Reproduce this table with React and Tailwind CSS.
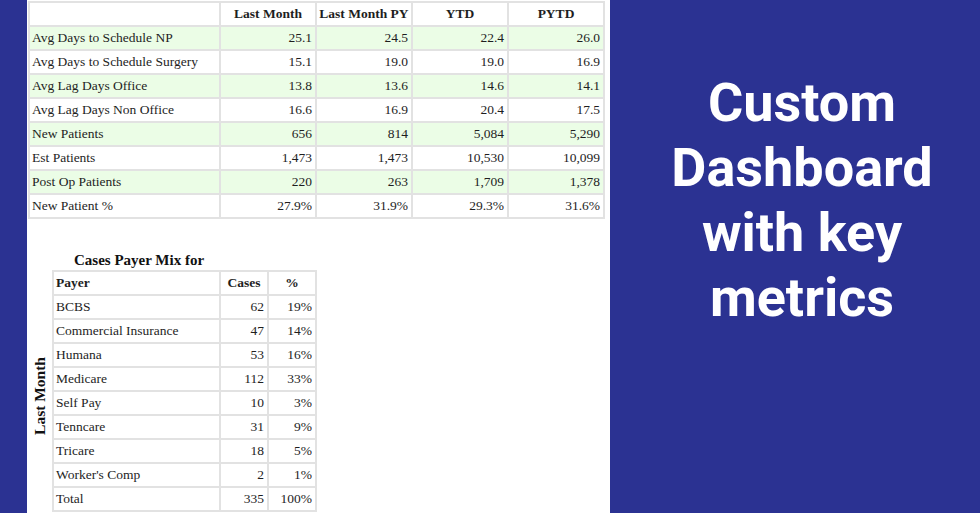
import React from "react";

const metrics = [
  ["Avg Days to Schedule NP", "25.1", "24.5", "22.4", "26.0"],
  ["Avg Days to Schedule Surgery", "15.1", "19.0", "19.0", "16.9"],
  ["Avg Lag Days Office", "13.8", "13.6", "14.6", "14.1"],
  ["Avg Lag Days Non Office", "16.6", "16.9", "20.4", "17.5"],
  ["New Patients", "656", "814", "5,084", "5,290"],
  ["Est Patients", "1,473", "1,473", "10,530", "10,099"],
  ["Post Op Patients", "220", "263", "1,709", "1,378"],
  ["New Patient %", "27.9%", "31.9%", "29.3%", "31.6%"],
];

const payers = [
  ["BCBS", "62", "19%"],
  ["Commercial Insurance", "47", "14%"],
  ["Humana", "53", "16%"],
  ["Medicare", "112", "33%"],
  ["Self Pay", "10", "3%"],
  ["Tenncare", "31", "9%"],
  ["Tricare", "18", "5%"],
  ["Worker's Comp", "2", "1%"],
  ["Total", "335", "100%"],
];

const cell = "border-2 border-[#e2e2e2] h-[24px] pl-[2px] pr-[3px] leading-none whitespace-nowrap";
const head = "border-2 border-[#e2e2e2] h-[24px] px-0 leading-none whitespace-nowrap font-bold";

export default function App() {
  return (
    <div className="flex w-[980px] h-[513px] overflow-hidden font-['Liberation_Serif','Times_New_Roman',serif] text-[13.5px] text-[#1e1e1e]">
      <div className="w-[27px] shrink-0 bg-[#2b3292]" />

      {/* report panel */}
      <div className="w-[583px] shrink-0 bg-white pl-[1px] pt-[1px]">
        <table className="border-collapse table-fixed w-[575px]">
          <colgroup>
            <col className="w-[191px]" />
            <col className="w-[96px]" />
            <col className="w-[96px]" />
            <col className="w-[96px]" />
            <col className="w-[96px]" />
          </colgroup>
          <thead>
            <tr>
              <th className={head}></th>
              <th className={head + " text-center"}>Last Month</th>
              <th className={head + " text-center"}>Last Month PY</th>
              <th className={head + " text-center"}>YTD</th>
              <th className={head + " text-center"}>PYTD</th>
            </tr>
          </thead>
          <tbody>
            {metrics.map((r, i) => (
              <tr key={r[0]} className={i % 2 === 0 ? "bg-[#ebfde6]" : "bg-white"}>
                <td className={cell + " text-left"}>{r[0]}</td>
                {r.slice(1).map((v, j) => (
                  <td key={j} className={cell + " text-right"}>{v}</td>
                ))}
              </tr>
            ))}
          </tbody>
        </table>

        <div className="mt-[31px] ml-[46px] h-[20px] text-[15px] font-bold leading-none pt-[3px] text-[#111]">
          Cases Payer Mix for
        </div>

        <div className="flex">
          <div className="w-[24px] flex items-center justify-center pt-[10px]">
            <span className="[writing-mode:vertical-rl] rotate-180 text-[15.5px] font-bold leading-none text-[#111]">
              Last Month
            </span>
          </div>
          <table className="border-collapse table-fixed w-[265px]">
            <colgroup>
              <col className="w-[167px]" />
              <col className="w-[48px]" />
              <col className="w-[48px]" />
            </colgroup>
            <thead>
              <tr>
                <th className={head + " text-left pl-[2px]"}>Payer</th>
                <th className={head + " text-center"}>Cases</th>
                <th className={head + " text-center"}>%</th>
              </tr>
            </thead>
            <tbody>
              {payers.map((r) => (
                <tr key={r[0]}>
                  <td className={cell + " text-left"}>{r[0]}</td>
                  <td className={cell + " text-right"}>{r[1]}</td>
                  <td className={cell + " text-right"}>{r[2]}</td>
                </tr>
              ))}
            </tbody>
          </table>
        </div>
      </div>

      {/* headline */}
      <div className="flex-1 bg-[#2b3292] pt-[70px] pl-[14px]">
        <h1 className="text-center text-white font-['Roboto',sans-serif] font-bold text-[54px] leading-[65px]">
          Custom
          <br />
          Dashboard
          <br />
          with key
          <br />
          metrics
        </h1>
      </div>
    </div>
  );
}
